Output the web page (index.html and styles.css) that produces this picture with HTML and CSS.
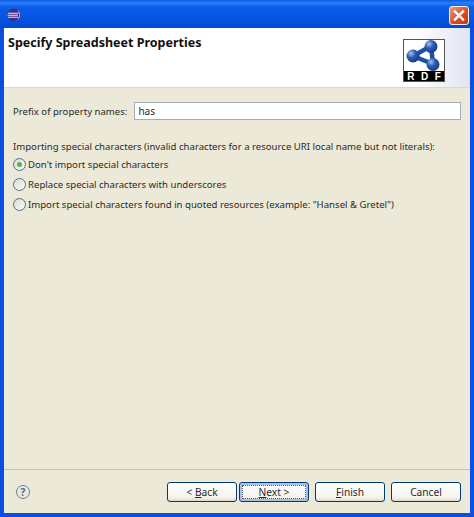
FILE: index.html
```html
<html>

<head>
    <meta name="viewport" content="width=device-width, initial-scale=1.0">
    <link rel="stylesheet" href="styles.css">
</head>

<body>
    <div class="window">
        <div class="titlebar">
            <svg class="appicon" width="14" height="14" viewBox="0 0 14 14">
                <circle cx="7" cy="7" r="6.5" fill="#3a2f86" />
                <path d="M1 5.2h10.5M.6 7.2h10.4M1 9.2h10.5" stroke="#f6dfe4" stroke-width="1.1" />
                <path d="M10 1.5a6.5 6.5 0 0 1 0 11a7.5 7.5 0 0 0 0-11z" fill="#d8d8ee" />
            </svg>
            <div class="closebtn">
                <svg width="18" height="17" viewBox="0 0 18 17">
                    <path d="M5 4.5l8 8M13 4.5l-8 8" stroke="#fff" stroke-width="2.4" stroke-linecap="square" />
                </svg>
            </div>
        </div>
        <div class="client">
            <div class="header">
                <h1 class="pagetitle">Specify Spreadsheet Properties</h1>
                <div class="rdflogo">
                    <svg class="rdfgraph" width="40" height="31" viewBox="0 0 40 31">
                        <defs>
                            <radialGradient id="node" cx="35%" cy="30%" r="75%">
                                <stop offset="0" stop-color="#a9c0ea" />
                                <stop offset="0.45" stop-color="#2a5cb4" />
                                <stop offset="1" stop-color="#143a86" />
                            </radialGradient>
                        </defs>
                        <path d="M9 16L27 6L29 24Z" fill="none" stroke="#1f4fa8" stroke-width="4.5" />
                        <circle cx="9" cy="16" r="6.5" fill="url(#node)" />
                        <circle cx="27" cy="6.5" r="6.5" fill="url(#node)" />
                        <circle cx="29" cy="24.5" r="6.5" fill="url(#node)" />
                    </svg>
                    <div class="rdftext"><span>R</span><span>D</span><span>F</span></div>
                </div>
            </div>
            <div class="content">
                <div class="prefixrow">
                    <label class="fieldlabel">Prefix of property names:</label>
                    <input class="textfield" type="text" value="has">
                </div>
                <p class="intro">Importing special characters (invalid characters for a resource URI local name but not literals):</p>
                <div class="radiolist">
                    <div class="radiorow"><span class="radio checked"></span>Don't import special characters</div>
                    <div class="radiorow"><span class="radio"></span>Replace special characters with underscores</div>
                    <div class="radiorow"><span class="radio"></span>Import special characters found in quoted resources (example: "Hansel &amp; Gretel")</div>
                </div>
            </div>
            <div class="footer">
                <div class="helpicon">?</div>
                <div class="buttons">
                    <div class="btngroup">
                        <button class="btn">&lt; <u>B</u>ack</button>
                        <button class="btn default"><u>N</u>ext &gt;</button>
                    </div>
                    <button class="btn"><u>F</u>inish</button>
                    <button class="btn">Cancel</button>
                </div>
            </div>
        </div>
    </div>
</body>

</html>
```

FILE: styles.css
```css
body {
    margin: 0px;
    font-family: "Noto Sans", sans-serif;
    font-size: 9.6px;
    color: #2a2a2a;
}

.window {
    width: 474px;
    height: 517px;
    display: flex;
    flex-direction: column;
    background-color: #0a4fe0;
    overflow: hidden;
}

.titlebar {
    height: 28px;
    flex-shrink: 0;
    display: flex;
    align-items: center;
    justify-content: space-between;
    padding: 2px 5px 0 7px;
    box-sizing: border-box;
    background: linear-gradient(to bottom, #0a5ae8 0px, #2b80f2 3px, #0a5cea 7px, #0553e0 20px, #0449d0 28px);
}

.closebtn {
    width: 20px;
    height: 19px;
    box-sizing: border-box;
    border: 1px solid #f2f2f2;
    border-radius: 3px;
    background: linear-gradient(135deg, #ee9a80, #d9491f 60%, #c43a12);
    display: flex;
}

.client {
    flex: 1;
    margin: 0 4px 4px 4px;
    background-color: #ece9d8;
    display: flex;
    flex-direction: column;
}

.header {
    height: 60px;
    box-sizing: border-box;
    display: flex;
    justify-content: space-between;
    background: linear-gradient(to right, #fff 0, #fff 88%, #dfe4f2 100%);
    border-bottom: 1px solid #dcd9c8;
}

.pagetitle {
    margin: 6px 0 0 4px;
    font-size: 12.5px;
    font-weight: bold;
    color: #111;
}

.rdflogo {
    width: 42px;
    height: 43px;
    box-sizing: border-box;
    margin: 11px 25px 0 0;
    background-color: #fff;
    border: 1px solid #555;
}

.rdfgraph {
    display: block;
}

.rdftext {
    height: 10px;
    background-color: #000;
    color: #fff;
    font-family: "Liberation Sans", sans-serif;
    font-size: 10px;
    font-weight: bold;
    display: flex;
    justify-content: space-around;
    align-items: center;
}

.content {
    flex: 1;
    padding: 14px 9px 0 9px;
}

.prefixrow {
    display: flex;
    align-items: center;
    gap: 7px;
}

.textfield {
    flex: 1;
    height: 18px;
    box-sizing: border-box;
    padding: 0 3px;
    font-family: inherit;
    font-size: 10px;
    color: #2a2a2a;
    background-color: #fff;
    border: 1px solid #a5acb2;
    outline: none;
}

.intro {
    margin: 19px 0 0 0;
    line-height: 15px;
    white-space: nowrap;
}

.radiolist {
    margin-top: 3px;
    display: flex;
    flex-direction: column;
    gap: 5px;
}

.radiorow {
    height: 15px;
    display: flex;
    align-items: center;
    gap: 2px;
}

.radio {
    width: 13px;
    height: 13px;
    box-sizing: border-box;
    border: 1px solid #4f6f96;
    border-radius: 50%;
    background: linear-gradient(135deg, #dcdcd4, #fbfbf8);
    display: flex;
    align-items: center;
    justify-content: center;
}

.radio.checked::after {
    content: "";
    width: 5px;
    height: 5px;
    border-radius: 50%;
    background-color: #4fb84a;
}

.footer {
    height: 44px;
    box-sizing: border-box;
    border-top: 1px solid #c5c2b0;
    display: flex;
    align-items: center;
    justify-content: space-between;
    padding: 1px 9px 0 12px;
}

.helpicon {
    width: 14px;
    height: 14px;
    box-sizing: border-box;
    border: 1px solid #6b7f99;
    border-radius: 50%;
    color: #4d6a8c;
    font-weight: bold;
    font-size: 10px;
    line-height: 12px;
    text-align: center;
}

.buttons {
    display: flex;
    gap: 6px;
}

.btngroup {
    display: flex;
    gap: 2px;
}

.btn {
    width: 70px;
    height: 20px;
    padding: 0;
    font-family: inherit;
    font-size: 10.2px;
    color: #2a2a2a;
    border: 1px solid #003c74;
    border-radius: 3px;
    background: linear-gradient(to bottom, #fff, #f4f3ee 80%, #dcd8cc);
}

.btn.default {
    box-shadow: inset 0 0 0 2px #a9c0e8;
    outline: 1px dotted #555;
    outline-offset: -4px;
}
```
